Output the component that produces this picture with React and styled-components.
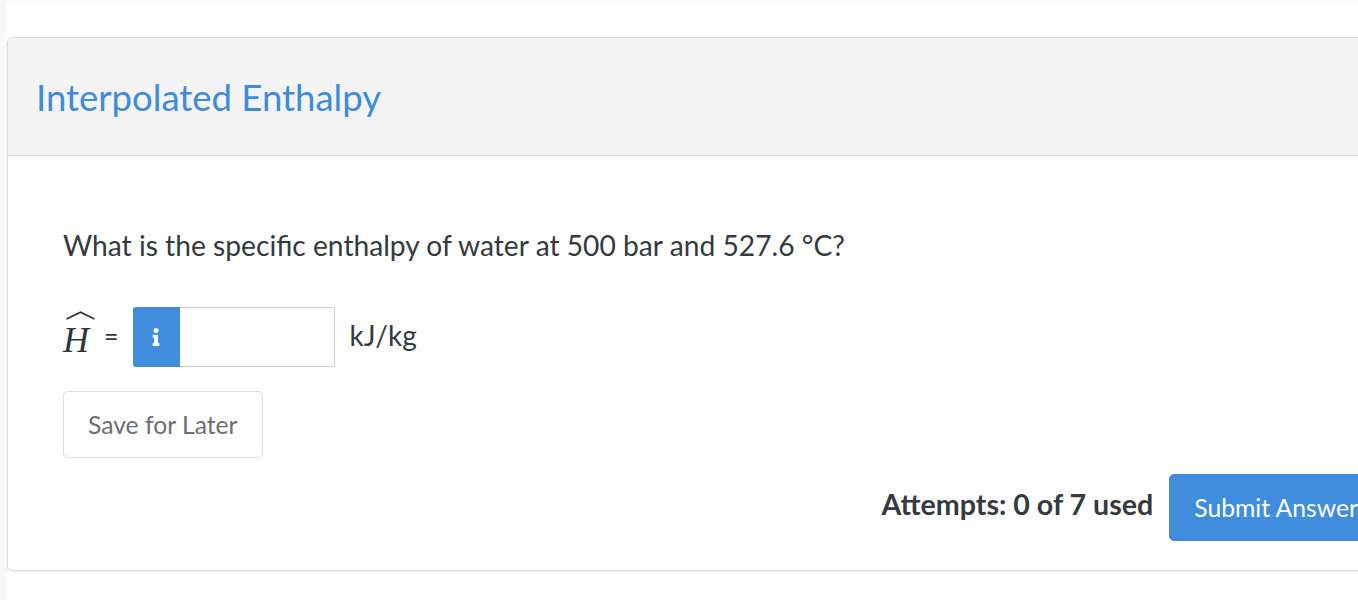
import styled, { createGlobalStyle } from "styled-components";
import { FaInfo } from "react-icons/fa";

const GlobalStyle = createGlobalStyle`
  html, body {
    margin: 0;
    padding: 0;
    background: #f9f9f9;
    overflow: hidden;
  }
  body {
    font-family: Lato, "Open Sans", "Liberation Sans", sans-serif;
    color: #343a40;
  }
`;

const Page = styled.main`
  margin: 2px 0 0 7px;
  padding-top: 35px;
  min-height: 598px;
  background: #ffffff;
  box-sizing: border-box;
`;

const Card = styled.section`
  width: 1430px;
  border: 1px solid #dcdcdc;
  border-radius: 5px;
  box-shadow: 0 1px 2px rgba(0, 0, 0, 0.08);
  background: #ffffff;
  overflow: hidden;
`;

const CardHeader = styled.header`
  height: 117px;
  display: flex;
  align-items: center;
  padding: 0 28px;
  background: #f4f4f4;
  border-bottom: 1px solid #dcdcdc;

  h2 {
    margin: 0;
    font-size: 36.5px;
    font-weight: 400;
    color: #3d8ddc;
  }
`;

const CardBody = styled.div`
  padding: 71px 55px 29px 55px;
`;

const Question = styled.p`
  margin: 0 0 44px;
  font-size: 28.2px;
  line-height: 36px;
`;

const AnswerRow = styled.div`
  display: flex;
  align-items: center;
  height: 60px;
`;

const MathVar = styled.span`
  position: relative;
  display: inline-block;
  font-family: "Liberation Serif", "DejaVu Serif", serif;
  font-style: italic;
  font-size: 36px;
  line-height: 1;
  padding-top: 6px;
  width: 37px;
  color: #2f3640;

  svg {
    position: absolute;
    top: -5px;
    left: 3px;
  }
`;

const Equals = styled.span`
  font-size: 25px;
  margin: 0 14px 2px 4px;
  color: #343a40;
`;

const InputGroup = styled.div`
  display: flex;
  height: 60px;
`;

const InfoAddon = styled.span`
  width: 47px;
  display: flex;
  align-items: center;
  justify-content: center;
  background: #3f8ddc;
  color: #ffffff;
  border-radius: 3px 0 0 3px;
`;

const TextInput = styled.input`
  width: 155px;
  height: 60px;
  box-sizing: border-box;
  border: 1px solid #cccccc;
  border-left: none;
  border-radius: 0 2px 2px 0;
  margin: 0;
  padding: 0 10px;
  font: inherit;
  font-size: 24px;
  outline: none;
`;

const Unit = styled.span`
  margin-left: 15px;
  padding-bottom: 5px;
  font-size: 28px;
`;

const Button = styled.button`
  height: 67px;
  padding: 0 24px;
  font-family: inherit;
  font-size: 24.7px;
  border-radius: 5px;
  cursor: pointer;
  border: 1px solid ${(p) => (p.$primary ? "#3f8ddc" : "#dddddd")};
  background: ${(p) => (p.$primary ? "#3f8ddc" : "#ffffff")};
  color: ${(p) => (p.$primary ? "#ffffff" : "#6c6f73")};
`;

const SaveRow = styled.div`
  margin-top: 24px;
`;

const Footer = styled.div`
  margin-top: 16px;
  display: flex;
  justify-content: flex-end;
  align-items: center;
  gap: 16px;
`;

const Attempts = styled.span`
  font-size: 28.6px;
  font-weight: 700;
  padding-bottom: 8px;
  color: #343a40;
`;

export default function App() {
  return (
    <>
      <GlobalStyle />
      <Page>
        <Card>
          <CardHeader>
            <h2>Interpolated Enthalpy</h2>
          </CardHeader>
          <CardBody>
            <Question>
              What is the specific enthalpy of water at 500 bar and 527.6 °C?
            </Question>
            <AnswerRow>
              <MathVar>
                <svg width="29" height="9" viewBox="0 0 29 9">
                  <path
                    d="M0.5 8 L14.5 1.2 L28.5 8"
                    fill="none"
                    stroke="#2f3640"
                    strokeWidth="1.7"
                  />
                </svg>
                H
              </MathVar>
              <Equals>=</Equals>
              <InputGroup>
                <InfoAddon>
                  <FaInfo size={18} />
                </InfoAddon>
                <TextInput type="text" aria-label="H" />
              </InputGroup>
              <Unit>kJ/kg</Unit>
            </AnswerRow>
            <SaveRow>
              <Button>Save for Later</Button>
            </SaveRow>
            <Footer>
              <Attempts>Attempts: 0 of 7 used</Attempts>
              <Button $primary>Submit Answer</Button>
            </Footer>
          </CardBody>
        </Card>
      </Page>
    </>
  );
}
